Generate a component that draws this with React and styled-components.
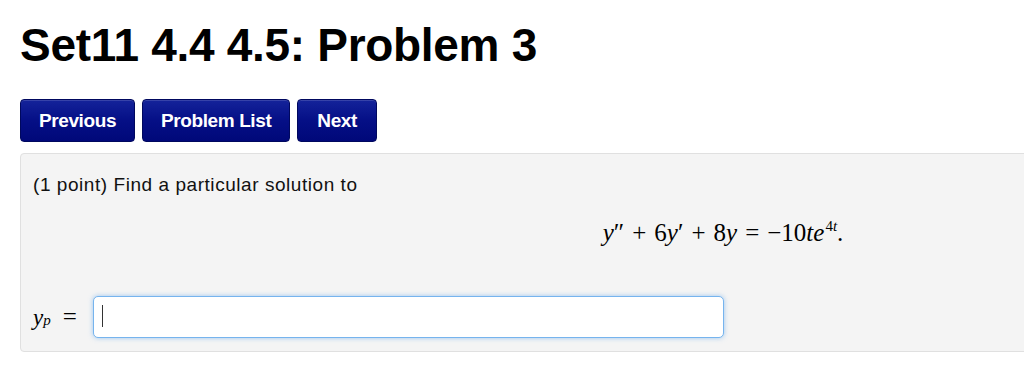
import React from 'react'
import styled, { createGlobalStyle } from 'styled-components'

const GlobalStyle = createGlobalStyle`
    html, body {
        margin: 0;
        padding: 0;
        background: #ffffff;
        overflow: hidden;
    }
    body {
        font-family: "Liberation Sans", Arial, sans-serif;
        color: #1a1a1a;
    }
`

const Page = styled.div`
    width: 1024px;
    height: 372px;
    padding: 22px 0 0 20px;
    box-sizing: border-box;
    overflow: hidden;
`

const Title = styled.h1`
    margin: 0;
    font-size: 46px;
    line-height: 46px;
    font-weight: 700;
    letter-spacing: -0.3px;
    color: #000;
`

const NavBar = styled.div`
    display: flex;
    gap: 7px;
    margin-top: 31px;
`

const NavButton = styled.button`
    height: 43px;
    padding: 0 ${p => p.$pad || 18}px;
    border: 1px solid #00085e;
    border-radius: 4px;
    background: linear-gradient(to bottom, #14239a 0%, #050f86 50%, #000879 100%);
    color: #ffffff;
    font-family: "Liberation Sans", Arial, sans-serif;
    font-weight: 700;
    font-size: 19px;
    letter-spacing: -0.4px;
    cursor: pointer;
    box-shadow: inset 0 1px 0 rgba(255,255,255,0.15);
`

const Panel = styled.div`
    margin-top: 11px;
    width: 1406px;
    padding: 19px 12px 13px;
    box-sizing: border-box;
    background: #f4f4f4;
    border: 1px solid #e0e0e0;
    border-radius: 4px;
`

const Prompt = styled.div`
    font-size: 19px;
    line-height: 24px;
    letter-spacing: 0.55px;
    color: #111;
`

const Display = styled.div`
    margin-top: 21px;
    text-align: center;
    font-family: "Liberation Serif", "Times New Roman", serif;
    font-size: 25px;
    line-height: 30px;
    color: #000;
`

const Var = styled.i`
    font-style: italic;
`

const Op = styled.span`
    margin: 0 ${p => p.$space || 8}px;
`

const Sup = styled.sup`
    font-size: 15px;
    vertical-align: 10px;
    line-height: 0;
    margin-left: 1px;
`

const AnswerRow = styled.div`
    display: flex;
    align-items: center;
    margin-top: 48px;
`

const Label = styled.div`
    width: 60px;
    font-family: "Liberation Serif", "Times New Roman", serif;
    font-size: 23px;
    color: #000;
    display: flex;
    align-items: baseline;
    sub {
        font-size: 15px;
        line-height: 0;
        vertical-align: -5px;
    }
`

const Equals = styled.span`
    margin-left: 12px;
    font-size: 25px;
`

const InputWrap = styled.div`
    position: relative;
    width: 631px;
    height: 42px;
`

const Answer = styled.input`
    width: 100%;
    height: 100%;
    box-sizing: border-box;
    border: 1px solid #76b4ee;
    border-radius: 5px;
    background: #ffffff;
    box-shadow: 0 0 5px rgba(82, 160, 236, 0.55);
    outline: none;
    padding: 0 8px;
    font-size: 18px;
    caret-color: transparent;
`

const Caret = styled.span`
    position: absolute;
    left: 9px;
    top: 9px;
    width: 1px;
    height: 22px;
    background: #333;
`

function App() {
    return (
        <>
            <GlobalStyle />
            <Page>
                <Title>Set11 4.4 4.5: Problem 3</Title>
                <NavBar>
                    <NavButton>Previous</NavButton>
                    <NavButton>Problem List</NavButton>
                    <NavButton $pad={19}>Next</NavButton>
                </NavBar>
                <Panel>
                    <Prompt>(1 point) Find a particular solution to</Prompt>
                    <Display>
                        <Var>y</Var>″<Op>+</Op>6<Var>y</Var>′<Op>+</Op>8<Var>y</Var>
                        <Op>=</Op>−10<Var>te</Var><Sup>4<Var>t</Var></Sup>.
                    </Display>
                    <AnswerRow>
                        <Label>
                            <Var>y</Var><sub><Var>p</Var></sub>
                            <Equals>=</Equals>
                        </Label>
                        <InputWrap>
                            <Answer type="text" />
                            <Caret />
                        </InputWrap>
                    </AnswerRow>
                </Panel>
            </Page>
        </>
    )
}

export default App
